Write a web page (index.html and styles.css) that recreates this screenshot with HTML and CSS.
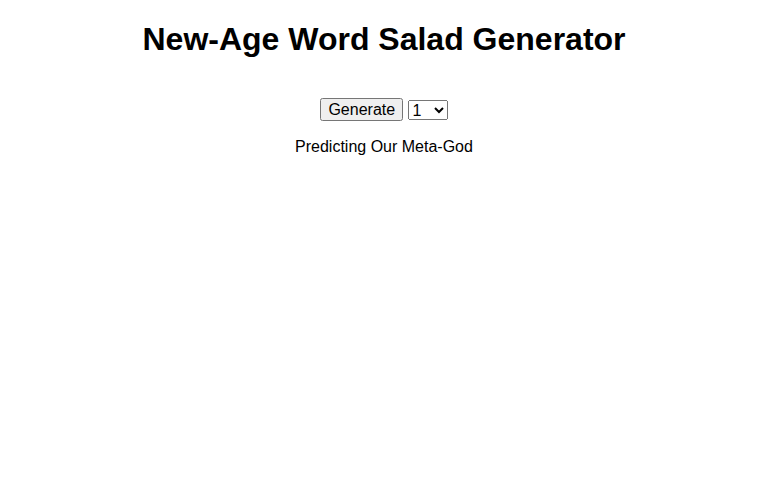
FILE: index.html
```html
<!DOCTYPE html>
<html lang="en">
<head>
    <meta charset="UTF-8">
    <meta name="viewport" content="width=device-width, initial-scale=1.0">
    <title>New-Age Word Salad Generator</title>
    <link rel="stylesheet" href="styles.css">
</head>
<body>
    <h1 class="title">New-Age Word Salad Generator</h1>

    <div class="controls">
        <button class="generate" id="generate">Generate</button>
        <select class="count" id="count">
            <option>1</option>
            <option>2</option>
            <option>3</option>
            <option>4</option>
            <option>5</option>
        </select>
    </div>

    <div class="output" id="output">
        <p>Predicting Our Meta-God</p>
    </div>
</body>
</html>
```

FILE: styles.css
```css
body {
    margin: 0 8px;
    font-family: "Liberation Sans", Arial, sans-serif;
    text-align: center;
    background-color: #fff;
    color: #000;
}
.title {
    font-size: 32px;
}
.controls {
    margin-top: 40px;
}
.generate,
.count {
    font-family: "Liberation Sans", Arial, sans-serif;
    font-size: 16px;
    vertical-align: middle;
}
.generate {
    height: 23px;
    padding: 0 6px;
}
.count {
    width: 40px;
    height: 20px;
}
.output p {
    margin: 17px 0 16px;
}
```
